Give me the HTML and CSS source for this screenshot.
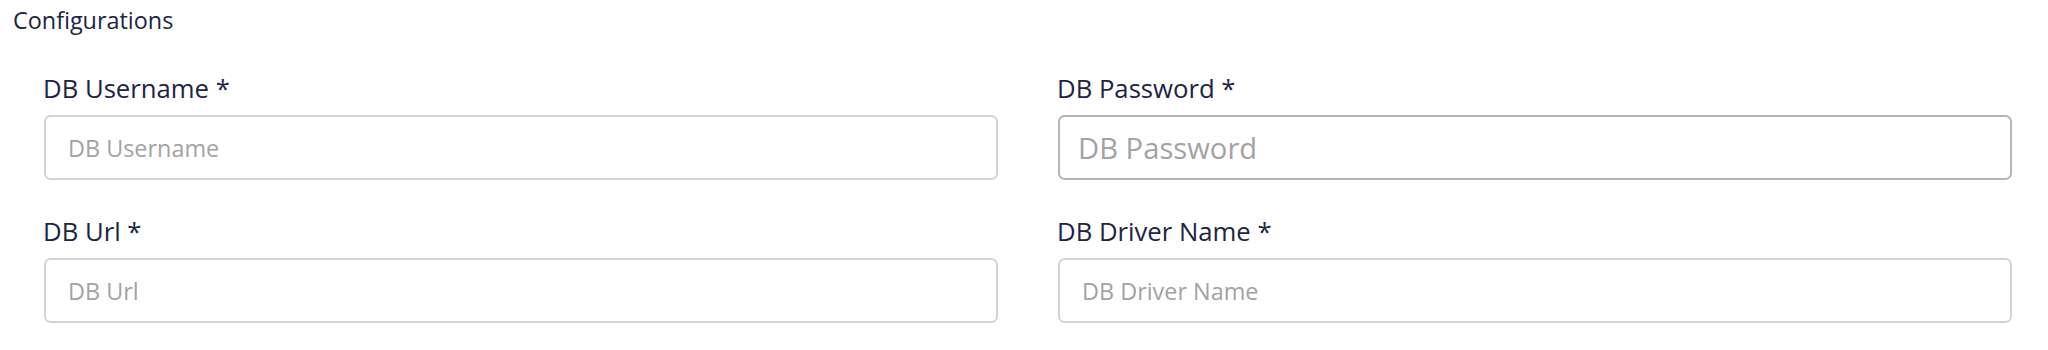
FILE: index.html
```html
<!DOCTYPE html>
<html lang="en">
<head>
<meta charset="utf-8">
<title>Configurations</title>
<link rel="stylesheet" href="styles.css">
</head>
<body>
<section class="config">
  <h2 class="config-title">Configurations</h2>
  <div class="config-grid">
    <div class="field">
      <label class="field-label" for="dbUser">DB Username *</label>
      <input class="field-input" id="dbUser" type="text" placeholder="DB Username">
    </div>
    <div class="field">
      <label class="field-label" for="dbPass">DB Password *</label>
      <input class="field-input field-input--password" id="dbPass" type="password" placeholder="DB Password">
    </div>
    <div class="field">
      <label class="field-label" for="dbUrl">DB Url *</label>
      <input class="field-input" id="dbUrl" type="text" placeholder="DB Url">
    </div>
    <div class="field">
      <label class="field-label" for="dbDriver">DB Driver Name *</label>
      <input class="field-input" id="dbDriver" type="text" placeholder="DB Driver Name">
    </div>
  </div>
</section>
</body>
</html>
```

FILE: styles.css
```css
* { box-sizing: border-box; }
html, body {
  margin: 0;
  padding: 0;
  background: #ffffff;
}
body {
  font-family: "Open Sans", Lato, "Liberation Sans", sans-serif;
  color: #1c2543;
}
.config {
  padding: 0 36px 0 14px;
}
.config-title {
  margin: 4px 0 0 -1px;
  font-size: 23.4px;
  line-height: 32px;
  font-weight: 400;
  color: #1c2543;
}
.config-grid {
  margin-top: 36px;
  padding-left: 30px;
  display: grid;
  grid-template-columns: 1fr 1fr;
  column-gap: 60px;
  row-gap: 35px;
}
.field {
  display: flex;
  flex-direction: column;
}
.field-label {
  font-size: 25.7px;
  line-height: 34px;
  margin: 0 0 9px -1px;
  color: #1c2543;
}
.field-input {
  height: 65px;
  border: 2px solid #d4d4d4;
  border-radius: 6.5px;
  padding: 0 22px;
  font-family: "Open Sans", Lato, sans-serif;
  font-size: 23.4px;
  color: #333;
  background: #fff;
  outline: none;
}
.field-input::placeholder {
  color: #a3a3a3;
}
.field-input--password {
  border-color: #b5b5b5;
  padding-left: 18px;
  font-size: 29.2px;
}
```
